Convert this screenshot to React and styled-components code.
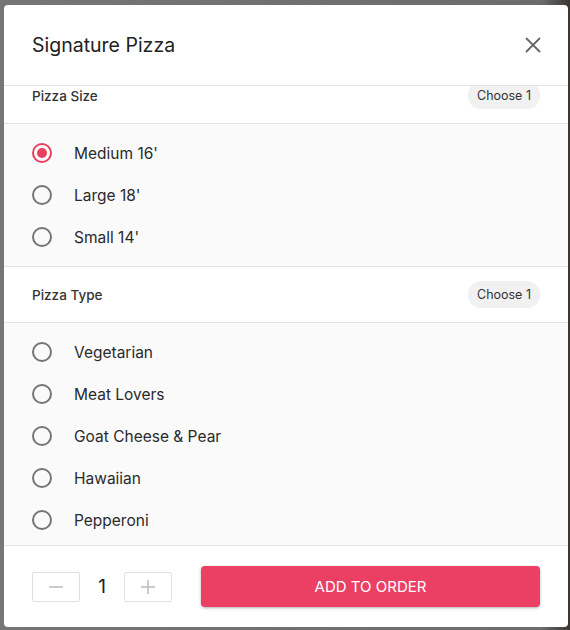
import React, { useState } from "react";
import styled, { createGlobalStyle } from "styled-components";

const GlobalStyle = createGlobalStyle`
   html, body {
      margin: 0;
      padding: 0;
      background: #6f6f6f;
      font-family: Inter, Roboto, "Liberation Sans", sans-serif;
   }
   * {
      box-sizing: border-box;
   }
`;

// styles
const Overlay = styled.div`
   width: 570px;
   height: 630px;
   padding: 5px 2px 3px 4px;
   background: linear-gradient(90deg, #767676 0%, #6c6c6c 95%, #3a3632 100%);
`;

const Modal = styled.div`
   width: 564px;
   height: 622px;
   background: #fff;
   border-radius: 4px;
   display: flex;
   flex-direction: column;
   overflow: hidden;
`;

const Header = styled.div`
   height: 81px;
   flex-shrink: 0;
   display: flex;
   align-items: center;
   justify-content: space-between;
   padding: 0 23px 0 28px;
   border-bottom: 1px solid #e3e3e3;
`;

const Title = styled.h2`
   margin: 0;
   font-size: 19.5px;
   font-weight: 400;
   color: #222;
`;

const CloseButton = styled.button`
   border: 0;
   background: none;
   padding: 0;
   width: 24px;
   height: 24px;
   display: flex;
   align-items: center;
   justify-content: center;
   cursor: pointer;
`;

const Body = styled.div`
   flex: 1;
   overflow: hidden;
`;

const Scroller = styled.div`
   margin-top: -18px;
`;

const SectionHeader = styled.div`
   height: 56px;
   display: flex;
   align-items: center;
   justify-content: space-between;
   padding: 0 28px;
   border-bottom: 1px solid #e3e3e3;
   background: #fff;
`;

const SectionTitle = styled.span`
   font-size: 13.5px;
   font-weight: 500;
   color: #333;
`;

const Pill = styled.span`
   font-size: 12.5px;
   color: #333;
   background: #f1f1f1;
   border-radius: 13px;
   padding: 6px 9px;
`;

const OptionList = styled.div`
   background: #fafafa;
   padding: 8px 0;
   border-bottom: 1px solid #e3e3e3;
`;

const OptionRow = styled.label`
   height: 42px;
   display: flex;
   align-items: center;
   padding-left: 28px;
   cursor: pointer;
`;

const Radio = styled.span`
   width: 20px;
   height: 20px;
   border-radius: 50%;
   border: 2px solid ${({ checked }) => (checked ? "#e8405f" : "#757575")};
   display: flex;
   align-items: center;
   justify-content: center;
   margin-right: 22px;

   &::after {
      content: "";
      width: 10px;
      height: 10px;
      border-radius: 50%;
      background: #e8405f;
      display: ${({ checked }) => (checked ? "block" : "none")};
   }
`;

const OptionLabel = styled.span`
   font-size: 15.5px;
   color: #2a2a2a;
`;

const Footer = styled.div`
   height: 82px;
   flex-shrink: 0;
   display: flex;
   align-items: center;
   padding: 0 28px;
   border-top: 1px solid #e3e3e3;
`;

const Stepper = styled.div`
   display: flex;
   align-items: center;
   margin-right: 29px;
`;

const StepButton = styled.button`
   width: 48px;
   height: 30px;
   border: 1px solid #e0e0e0;
   border-radius: 2px;
   background: #fff;
   display: flex;
   align-items: center;
   justify-content: center;
   padding: 0;
   cursor: pointer;
`;

const Count = styled.span`
   width: 44px;
   text-align: center;
   font-size: 19px;
   color: #222;
`;

const AddButton = styled.button`
   flex: 1;
   height: 41px;
   border: 0;
   border-radius: 4px;
   background: #eb3f64;
   color: #fff;
   font-family: inherit;
   font-size: 15px;
   cursor: pointer;
   box-shadow: 0 1px 3px rgba(0, 0, 0, 0.3);
`;

// data
const sections = [
   { title: "Pizza Size", options: ["Medium 16'", "Large 18'", "Small 14'"] },
   { title: "Pizza Type", options: ["Vegetarian", "Meat Lovers", "Goat Cheese & Pear", "Hawaiian", "Pepperoni"] },
];

// components
function Section({ title, options, selected, onSelect }) {
   return (
      <>
         <SectionHeader>
            <SectionTitle>{title}</SectionTitle>
            <Pill>Choose 1</Pill>
         </SectionHeader>
         <OptionList>
            {options.map((opt) => (
               <OptionRow key={opt} onClick={() => onSelect(opt)}>
                  <Radio checked={selected === opt} />
                  <OptionLabel>{opt}</OptionLabel>
               </OptionRow>
            ))}
         </OptionList>
      </>
   );
}

function App() {
   const [choices, setChoices] = useState({ "Pizza Size": "Medium 16'" });
   const [count, setCount] = useState(1);

   return (
      <>
         <GlobalStyle />
         <Overlay>
            <Modal>
               <Header>
                  <Title>Signature Pizza</Title>
                  <CloseButton aria-label="close">
                     <svg width="16" height="16" viewBox="0 0 16 16">
                        <path d="M1 1L15 15M15 1L1 15" stroke="#666" strokeWidth="1.8" fill="none" />
                     </svg>
                  </CloseButton>
               </Header>
               <Body>
                  <Scroller>
                     {sections.map((s) => (
                        <Section
                           key={s.title}
                           title={s.title}
                           options={s.options}
                           selected={choices[s.title]}
                           onSelect={(opt) => setChoices({ ...choices, [s.title]: opt })}
                        />
                     ))}
                  </Scroller>
               </Body>
               <Footer>
                  <Stepper>
                     <StepButton aria-label="decrease" onClick={() => setCount(Math.max(1, count - 1))}>
                        <svg width="16" height="16" viewBox="0 0 16 16">
                           <path d="M1 8H15" stroke="#bbb" strokeWidth="1.5" />
                        </svg>
                     </StepButton>
                     <Count>{count}</Count>
                     <StepButton aria-label="increase" onClick={() => setCount(count + 1)}>
                        <svg width="16" height="16" viewBox="0 0 16 16">
                           <path d="M1 8H15M8 1V15" stroke="#bbb" strokeWidth="1.5" />
                        </svg>
                     </StepButton>
                  </Stepper>
                  <AddButton>ADD TO ORDER</AddButton>
               </Footer>
            </Modal>
         </Overlay>
      </>
   );
}

export default App;
